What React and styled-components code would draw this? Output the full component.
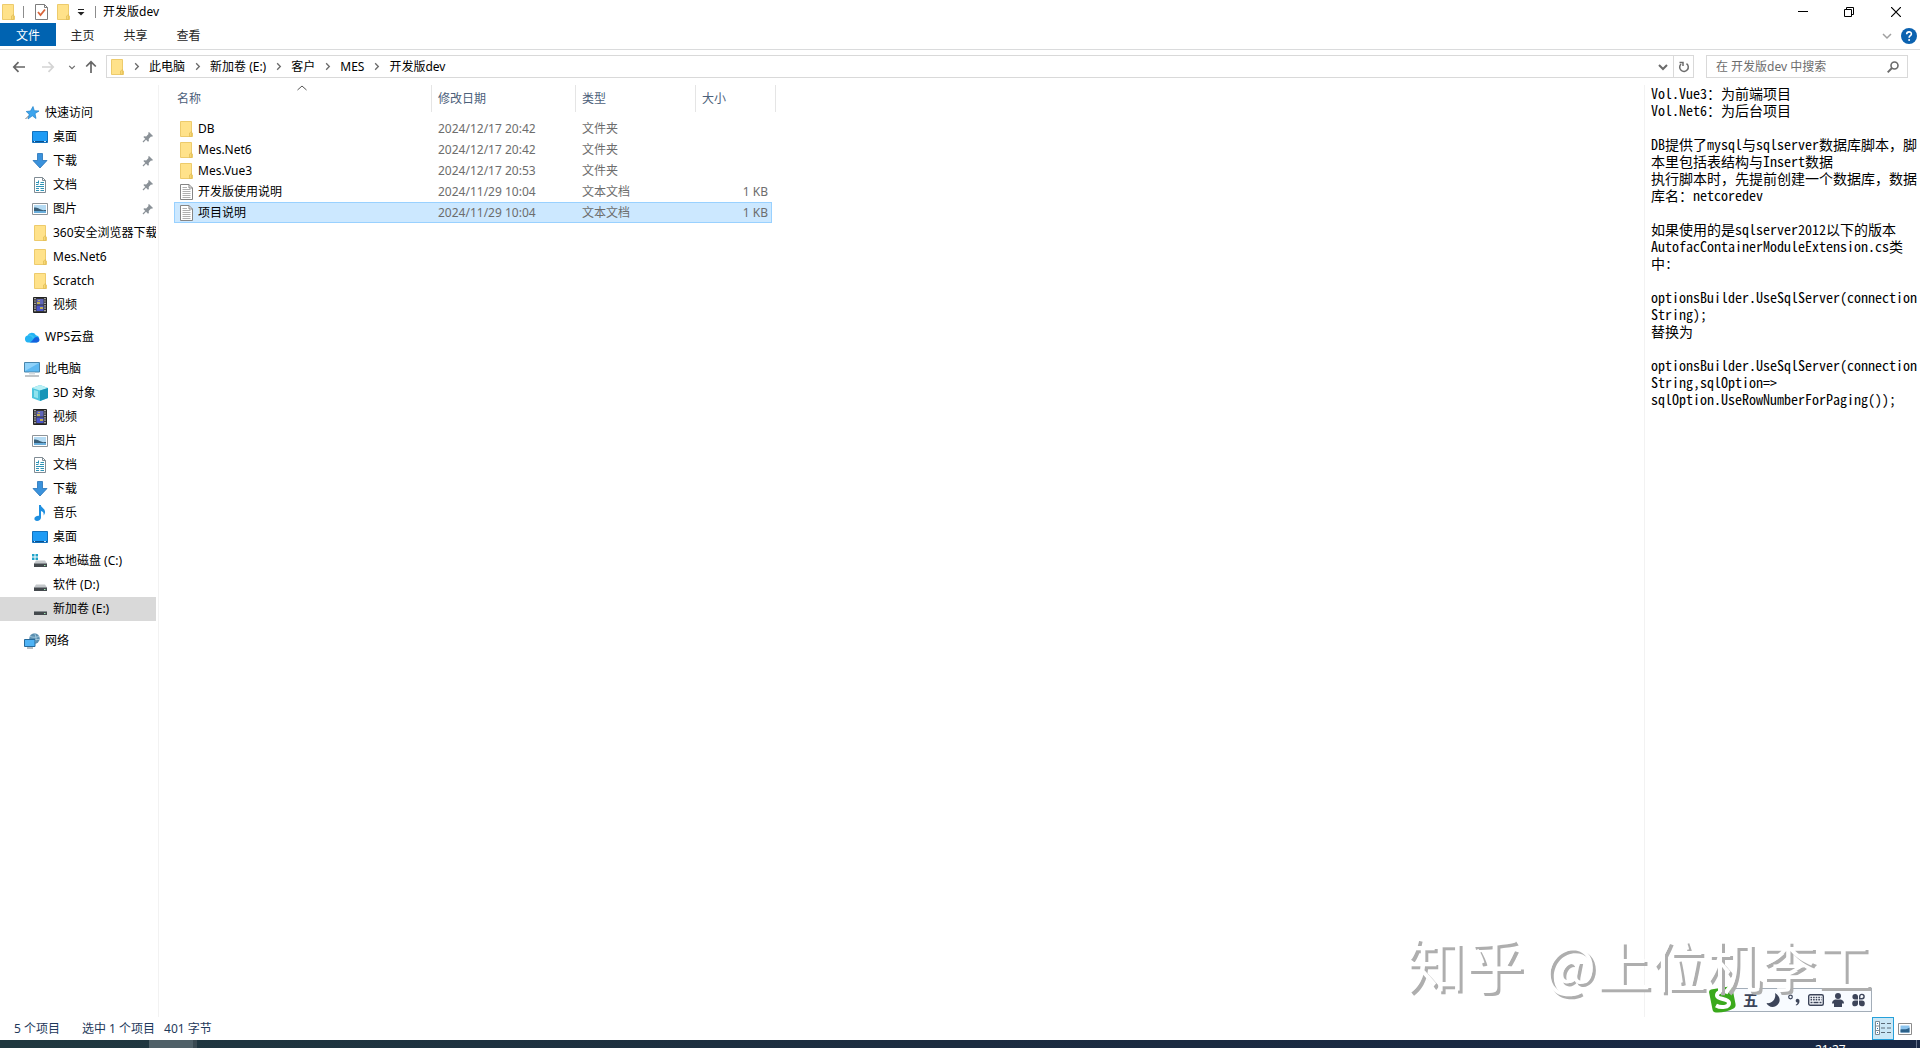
import React, { useState } from 'react';
import styled, { createGlobalStyle } from 'styled-components';

const GlobalStyle = createGlobalStyle`
  * {
    box-sizing: border-box;
  }

  body {
    margin: 0;
    background: #fff;
    color: #000;
    font-family: 'Noto Sans', 'Noto Sans CJK SC', sans-serif;
    font-size: 12px;
    line-height: 16px;
  }

  button,
  input {
    margin: 0;
    padding: 0;
    border: 0;
    background: none;
    color: inherit;
    font: inherit;
  }

  a {
    color: inherit;
    text-decoration: none;
  }

  svg {
    display: block;
    flex: none;
  }
`;

// styled components
const Window = styled.div`
  position: relative;
  display: flex;
  flex-direction: column;
  min-height: 100vh;
  overflow: hidden;
`;

const TitleBar = styled.header`
  display: flex;
  align-items: center;
  height: 23px;
  padding-left: 2px;
`;

const QuickTools = styled.div`
  display: flex;
  align-items: center;
  gap: 8px;
  margin-right: 7px;
`;

const Rule = styled.span`
  width: 1px;
  height: 12px;
  background: #8c8c8c;
`;

const Title = styled.h1`
  flex: 1;
  margin: 0;
  font-size: 12px;
  font-weight: 400;
`;

const IconButton = styled.button`
  display: flex;
  align-items: center;
  justify-content: center;
  width: ${(props) => props.$width}px;
  height: ${(props) => props.$height || 22}px;
`;

const Tabs = styled.nav`
  display: flex;
  align-items: flex-start;
  height: 27px;
  border-bottom: 1px solid #dadbdc;
`;

const Tab = styled.button`
  width: ${(props) => (props.$file ? 56 : 53)}px;
  height: 23px;
  padding-top: 2px;
  background: ${(props) => (props.$file ? '#0063b1' : 'transparent')};
  color: ${(props) => (props.$file ? '#fff' : '#262626')};
`;

const TabTools = styled.div`
  display: flex;
  align-items: center;
  height: 26px;
  margin-left: auto;
  padding-right: 3px;
`;

const AddressRow = styled.div`
  display: flex;
  align-items: center;
  height: 35px;
  padding: 0 12px 2px 8px;
`;

const History = styled.div`
  display: flex;
  align-items: center;
  width: 98px;
`;

const AddressBox = styled.div`
  display: flex;
  flex: 1;
  align-items: center;
  height: 23px;
  padding-left: 4px;
  border: 1px solid #d9d9d9;
`;

const Crumbs = styled.div`
  display: flex;
  flex: 1;
  align-items: center;
`;

const Separator = styled.span`
  display: flex;
  align-items: center;
  justify-content: center;
  width: 25px;
`;

const Refresh = styled(IconButton)`
  border-left: 1px solid #d9d9d9;
`;

const SearchBox = styled.label`
  display: flex;
  align-items: center;
  width: 202px;
  height: 23px;
  margin-left: 12px;
  padding: 0 8px 0 9px;
  border: 1px solid #d9d9d9;

  input {
    flex: 1;
    min-width: 0;
    outline: 0;
  }

  input::placeholder {
    color: #6d6d6d;
    opacity: 1;
  }
`;

const Body = styled.main`
  display: flex;
  flex: 1;
`;

const Sidebar = styled.nav`
  display: flex;
  flex-direction: column;
  gap: 8px;
  width: 159px;
  padding: 16px 2px 0 0;
  border-right: 1px solid #f2f2f2;
`;

const NavLink = styled.a`
  display: flex;
  align-items: center;
  gap: 5px;
  height: 24px;
  padding-left: ${(props) => (props.$root ? 24 : 32)}px;
  background: ${(props) => (props.$active ? '#d9d9d9' : 'transparent')};
  overflow: hidden;
  white-space: nowrap;
`;

const NavIcon = styled.span`
  display: flex;
  flex: none;
  justify-content: center;
  width: 16px;
`;

const NavLabel = styled.span`
  flex: 1;
`;

const Pin = styled.span`
  margin-right: 2px;
`;

const FileArea = styled.section`
  flex: 1;
  padding-left: 15px;
`;

const FileTable = styled.table`
  width: 602px;
  table-layout: fixed;
  border-collapse: separate;
  border-spacing: 0;

  th {
    padding: 0 0 6px;
    font-weight: 400;
    text-align: left;
  }

  td {
    height: 21px;
    padding: 0 4px 0 6px;
    border: solid transparent;
    border-width: 1px 0;
    color: #6d6d6d;
    line-height: 19px;
    white-space: nowrap;
  }

  td:first-child {
    padding-left: 5px;
    border-left-width: 1px;
    color: #000;
  }

  td:nth-child(4) {
    padding-right: 3px;
    border-right-width: 1px;
    text-align: right;
  }
`;

const HeadCell = styled.div`
  position: relative;
  display: flex;
  align-items: center;
  height: 27px;
  padding-left: ${(props) => (props.$first ? 3 : 6)}px;
  border-right: 1px solid #e5e5e5;
  color: #4c607a;
`;

const SortMark = styled.span`
  position: absolute;
  top: 0;
  left: 50%;
  margin-left: -6px;
`;

const FileRow = styled.tr`
  && td {
    background: ${(props) => (props.$selected ? '#cce8ff' : 'transparent')};
    border-color: ${(props) => (props.$selected ? '#99d1ff' : 'transparent')};
  }
`;

const FileName = styled.span`
  display: flex;
  align-items: center;
  gap: 5px;
`;

const Preview = styled.aside`
  width: 276px;
  padding-left: 6px;
  border-left: 1px solid #f2f2f2;
`;

const PreviewText = styled.pre`
  margin: 0;
  font-family: 'Noto Sans Mono CJK SC', 'Noto Sans CJK SC', monospace;
  font-size: 14px;
  line-height: 17px;
`;

const StatusBar = styled.footer`
  display: flex;
  align-items: center;
  height: 23px;
  padding: 0 4px 0 14px;
  color: #1e395b;
`;

const Status = styled.span`
  margin-right: ${(props) => props.$gap}px;
`;

const ViewModes = styled.div`
  display: flex;
  margin-left: auto;
`;

const ViewButton = styled(IconButton)`
  border: 1px solid ${(props) => (props.$active ? '#26a0da' : 'transparent')};
  background: ${(props) => (props.$active ? '#cbe8f6' : 'transparent')};
`;

const Taskbar = styled.div`
  display: flex;
  justify-content: space-between;
  height: 8px;
  padding: 0 3px 0 149px;
  overflow: hidden;
  background: linear-gradient(to right, #20383f, #1c2c40 50%, #182744);
`;

const TaskButton = styled.span`
  width: 48px;
  border-right: 4px solid #3a4a52;
  background: #4f6068;
`;

const Clock = styled.time`
  width: 102px;
  padding-top: 2px;
  border-right: 1px solid #66728a;
  color: #fff;
`;

const Watermark = styled.div`
  position: absolute;
  right: 49px;
  bottom: 57px;
  display: flex;
  gap: 20px;
  color: #fff;
  font-family: 'Noto Sans CJK SC', sans-serif;
  font-size: 55px;
  line-height: 56px;
  text-shadow: 3px 3px 0 #aeaeae;
  white-space: nowrap;
  pointer-events: none;
`;

const Site = styled.span`
  font-size: 59px;
`;

const ImeBar = styled.div`
  position: absolute;
  right: 48px;
  bottom: 36px;
  display: flex;
  align-items: center;
  justify-content: space-between;
  width: 154px;
  height: 24px;
  padding: 0 6px 0 24px;
  border: 1px solid #a3adb8;
  background: #f8fbff;
  color: #3c4459;
  font-size: 15px;
  font-weight: 700;
`;

const ImeLogo = styled.span`
  position: absolute;
  left: -11px;
  bottom: -2px;
`;

// icons
const FolderIcon = () => (
  <svg width="13" height="16" viewBox="0 0 13 16">
    <path d="M.5.5h11v11l1 .5v3.5H.5z" fill="#ffe28a" stroke="#edcb6c" />
    <path d="M9.5 15.5V12l2-1.500v5z" fill="#f7d774" stroke="#e0bb55" strokeWidth=".7" />
  </svg>
);

const TextIcon = () => (
  <svg width="13" height="16" viewBox="0 0 13 16">
    <path d="M.5.5h8.500l3.500 3.500v11.500H.5z" fill="#fff" stroke="#858585" />
    <path d="M9 .5V4h3.500" fill="none" stroke="#858585" />
    <path d="M2.500 3.500H7M2.500 5.500h8M2.500 7.500h8M2.500 9.500h8M2.500 11.500h8M2.500 13.500h8" stroke="#b0b0b0" />
  </svg>
);

const CheckIcon = () => (
  <svg width="13" height="16" viewBox="0 0 13 16">
    <path d="M.5.5h9l3 3v12H.5z" fill="#fff" stroke="#7d7d7d" />
    <path d="M9.500.5v3h3" fill="none" stroke="#7d7d7d" />
    <path d="M3 8l2.500 3L10 5.500" fill="none" stroke="#d8643a" strokeWidth="1.800" />
  </svg>
);

const StarIcon = () => (
  <svg width="16" height="16" viewBox="0 0 16 16">
    <path d="M9 1.500l1.300 4.200 4.700.300-4 2.600 1 4.900-3.700-2.700L4 14l1.200-4.800-3-2.700 4.300-.500z" fill="#3da5ee" stroke="#1d7fc9" strokeWidth=".7" />
    <path d="M4.500 11L1.500 14" stroke="#777" />
  </svg>
);

const DesktopIcon = () => (
  <svg width="16" height="16" viewBox="0 0 16 16">
    <path d="M.5 2.500h15v11H.5z" fill="#1e9bf5" stroke="#1271bd" />
    <path d="M1 12.500h14" stroke="#0b4f8c" />
    <path d="M2 12.500h1M12 12.500h2" stroke="#bfe3ff" />
  </svg>
);

const DownloadIcon = () => (
  <svg width="16" height="16" viewBox="0 0 16 16">
    <path d="M5.500 .5h5v7h4.500l-7 7.500-7-7.500h4.500z" fill="#3a92dc" stroke="#2472b8" strokeWidth=".8" />
  </svg>
);

const DocumentIcon = () => (
  <svg width="16" height="16" viewBox="0 0 16 16">
    <path d="M2.500.5h8l3 3v12h-11z" fill="#fff" stroke="#808c94" />
    <path d="M10.500.5v3h3" fill="none" stroke="#808c94" />
    <path d="M4 5.500h3M8.500 5.500H12M4 7.500h2.500M8 7.500h4M4 9.500h8M4 11.500h3M8.500 11.500H12M4 13.500h3M8.500 13.500H12M6.500 3.500v3" stroke="#2f93b5" />
  </svg>
);

const PictureIcon = () => (
  <svg width="16" height="16" viewBox="0 0 16 16">
    <path d="M.5 2.500h15v11H.5z" fill="#fff" stroke="#8e9499" />
    <path d="M2 4h12v8H2z" fill="#b5dbf3" />
    <path d="M2 6.500c3-.5 5 1 7 2s3 .5 5 .5v2H2z" fill="#3a5f78" />
    <path d="M2 10h12v2H2z" fill="#6aaedb" />
  </svg>
);

const VideoIcon = () => (
  <svg width="16" height="16" viewBox="0 0 16 16">
    <path d="M1.500.5h13v15h-13z" fill="#363636" stroke="#222" />
    <path d="M4.500 2h7v5.500h-7z" fill="#6066b8" />
    <path d="M4.500 8.500h7V14h-7z" fill="#4a55c9" />
    <path d="M5 5h3v2H5zM8 10h3v2H8zM6 3h2v1H6z" fill="#bfae55" />
    <path d="M3 1v14M13 1v14" stroke="#e8e8e8" strokeWidth="1.200" strokeDasharray="1.200 1.200" />
  </svg>
);

const CloudIcon = () => (
  <svg width="16" height="16" viewBox="0 0 16 16">
    <path d="M4 13.500A3.600 3.600 0 0 1 3.500 6.500 4.800 4.800 0 0 1 12 6.300a3.700 3.700 0 0 1 .5 7.200z" fill="#24b3f3" />
    <path d="M5 13.500c4-.500 4-5 7.500-5.500 2 .200 3 1.500 3 3 0 1.600-1.400 2.500-3 2.500z" fill="#1560dd" />
    <path d="M4.500 6.300c3-.6 4.500 1 5 3" fill="none" stroke="#3cc3f2" strokeWidth="1.500" />
  </svg>
);

const ComputerIcon = () => (
  <svg width="16" height="16" viewBox="0 0 16 16">
    <path d="M.5 1.500h15v9.500H.5z" fill="#5eb9f2" stroke="#4886ad" />
    <path d="M1 2h14L1 10z" fill="#8fd2fa" />
    <path d="M5 11.500h6v2H5z" fill="#d4dade" />
    <path d="M1 15h14" stroke="#838b91" />
  </svg>
);

const CubeIcon = () => (
  <svg width="16" height="16" viewBox="0 0 16 16">
    <path d="M0 3l8-3 8 3v10l-8 3-8-3z" fill="#4cc4dd" />
    <path d="M0 3l8-3 8 3-8 2.500z" fill="#b9f0f5" />
    <path d="M8 5.500L16 3v10l-8 3z" fill="#1795b8" />
    <path d="M2 5l4 1.200v7L2 12z" fill="#8fe3ee" />
  </svg>
);

const MusicIcon = () => (
  <svg width="16" height="16" viewBox="0 0 16 16">
    <path d="M7 0h1.800c.3 3 4.700 3.500 4.200 7.500-.2 1.500-.8 2.300-1.500 3 .7-2.500-.5-4-2.500-4.500v6.500C9 14.500 7 16 5 16c-1.600 0-2.600-.9-2.600-2.200C2.400 12 4.500 10.500 7 10.800z" fill="#1e8fe0" />
  </svg>
);

const DriveIcon = ({ system, thin }) => (
  <svg width="16" height="16" viewBox="0 0 16 16">
    {system && <path d="M0 1h2.500v2.500H0zM3.500 1H6v2.500H3.500zM0 4.500h2.500V7H0zM3.500 4.500H6V7H3.500z" fill="#20a3c9" />}
    {!thin && <path d="M4 7.500h9l2 3H2z" fill="#c3c7ca" />}
    <path d="M2 10.500h13V14H2z" fill="#44494d" />
    <path d="M2 10.500h13" stroke="#888d91" />
    <path d="M12 12.500h1.500" stroke="#9fe6b1" />
  </svg>
);

const NetworkIcon = () => (
  <svg width="16" height="16" viewBox="0 0 16 16">
    <circle cx="10.500" cy="5.500" r="5.200" fill="#5b8fb0" />
    <path d="M6 3.500c3 1 6 1 9 0M10.500.5c2 3 2 7 0 10M5.500 6.500h10" fill="none" stroke="#bcdcec" strokeWidth=".7" />
    <path d="M.5 6.500h10.500v7H.5z" fill="#4fb3f5" stroke="#25699a" />
    <path d="M3 15h6" stroke="#6c7a84" />
  </svg>
);

const PinIcon = () => (
  <svg width="12" height="12" viewBox="0 0 12 12">
    <path d="M7 1l4 4-1 .8-1-.2-2.300 2.300.2 2-.9.8L1.400 6.100 2.200 5.200l2 .2L6.500 3l-.3-1.200z" fill="#8a9197" />
    <path d="M3.800 8.200L1 11" stroke="#8a9197" strokeWidth="1.200" />
  </svg>
);

const Chevron = ({ d, size = 10, color = '#6b6b6b', weight = 1.5 }) => (
  <svg width={size} height={size} viewBox="0 0 10 10">
    <path d={d} fill="none" stroke={color} strokeWidth={weight} />
  </svg>
);

const Arrow = ({ turn = 0, color = '#666' }) => (
  <svg width="14" height="14" viewBox="0 0 14 14">
    <path d="M13 7H2M6.500 2.200L1.800 7l4.700 4.800" transform={`rotate(${turn} 7 7)`} fill="none" stroke={color} strokeWidth="1.700" />
  </svg>
);

// data
const groups = [
  [
    { label: '快速访问', icon: <StarIcon />, root: true },
    { label: '桌面', icon: <DesktopIcon />, pin: true },
    { label: '下载', icon: <DownloadIcon />, pin: true },
    { label: '文档', icon: <DocumentIcon />, pin: true },
    { label: '图片', icon: <PictureIcon />, pin: true },
    { label: '360安全浏览器下载', icon: <FolderIcon /> },
    { label: 'Mes.Net6', icon: <FolderIcon /> },
    { label: 'Scratch', icon: <FolderIcon /> },
    { label: '视频', icon: <VideoIcon /> },
  ],
  [{ label: 'WPS云盘', icon: <CloudIcon />, root: true }],
  [
    { label: '此电脑', icon: <ComputerIcon />, root: true },
    { label: '3D 对象', icon: <CubeIcon /> },
    { label: '视频', icon: <VideoIcon /> },
    { label: '图片', icon: <PictureIcon /> },
    { label: '文档', icon: <DocumentIcon /> },
    { label: '下载', icon: <DownloadIcon /> },
    { label: '音乐', icon: <MusicIcon /> },
    { label: '桌面', icon: <DesktopIcon /> },
    { label: '本地磁盘 (C:)', icon: <DriveIcon system /> },
    { label: '软件 (D:)', icon: <DriveIcon /> },
    { label: '新加卷 (E:)', icon: <DriveIcon thin />, active: true },
  ],
  [{ label: '网络', icon: <NetworkIcon />, root: true }],
];

const files = [
  { name: 'DB', date: '2024/12/17 20:42', type: '文件夹' },
  { name: 'Mes.Net6', date: '2024/12/17 20:42', type: '文件夹' },
  { name: 'Mes.Vue3', date: '2024/12/17 20:53', type: '文件夹' },
  { name: '开发版使用说明', date: '2024/11/29 10:04', type: '文本文档', size: '1 KB' },
  { name: '项目说明', date: '2024/11/29 10:04', type: '文本文档', size: '1 KB' },
];

const crumbs = ['此电脑', '新加卷 (E:)', '客户', 'MES', '开发版dev'];

const previewText = `Vol.Vue3：为前端项目
Vol.Net6：为后台项目

DB提供了mysql与sqlserver数据库脚本，脚
本里包括表结构与Insert数据
执行脚本时，先提前创建一个数据库，数据
库名：netcoredev

如果使用的是sqlserver2012以下的版本
AutofacContainerModuleExtension.cs类
中:

optionsBuilder.UseSqlServer(connection
String);
替换为

optionsBuilder.UseSqlServer(connection
String,sqlOption=>
sqlOption.UseRowNumberForPaging());`;

function Header() {
  return (
    <>
      <TitleBar>
        <QuickTools>
          <FolderIcon />
          <Rule />
        </QuickTools>
        <IconButton $width={20} aria-label="属性"><CheckIcon /></IconButton>
        <IconButton $width={24} aria-label="新建文件夹"><FolderIcon /></IconButton>
        <IconButton $width={12} aria-label="自定义快速访问工具栏">
          <svg width="8" height="8" viewBox="0 0 8 8">
            <path d="M1 1.500h6" stroke="#222" />
            <path d="M.5 4h7L4 7.500z" fill="#222" />
          </svg>
        </IconButton>
        <QuickTools>
          <span />
          <Rule />
        </QuickTools>
        <Title>开发版dev</Title>
        <IconButton $width={46} aria-label="最小化">
          <svg width="10" height="10" viewBox="0 0 10 10"><path d="M0 4.500h10" stroke="#000" /></svg>
        </IconButton>
        <IconButton $width={45} aria-label="还原">
          <svg width="10" height="10" viewBox="0 0 10 10">
            <path d="M.5 2.500h7v7h-7zM2.500 2.500v-2h7v7h-2" fill="none" stroke="#000" />
          </svg>
        </IconButton>
        <IconButton $width={49} aria-label="关闭">
          <svg width="10" height="10" viewBox="0 0 10 10"><path d="M0 0l10 10M10 0L0 10" stroke="#000" strokeWidth="1.200" /></svg>
        </IconButton>
      </TitleBar>
      <Tabs>
        <Tab $file>文件</Tab>
        <Tab>主页</Tab>
        <Tab>共享</Tab>
        <Tab>查看</Tab>
        <TabTools>
          <IconButton $width={28} aria-label="展开功能区">
            <Chevron d="M1 3l4 4 4-4" color="#a0a0a0" />
          </IconButton>
          <IconButton $width={16} aria-label="帮助">
            <svg width="16" height="16" viewBox="0 0 16 16">
              <circle cx="8" cy="8" r="8" fill="#0b62b0" />
              <path d="M5.700 6.200c0-3.200 4.800-3 4.700-.2 0 1.700-2.300 1.700-2.300 3.700" fill="none" stroke="#fff" strokeWidth="1.600" />
              <circle cx="8.100" cy="12" r="1" fill="#fff" />
            </svg>
          </IconButton>
        </TabTools>
      </Tabs>
    </>
  );
}

function Address() {
  const [query, setQuery] = useState('');

  return (
    <AddressRow>
      <History>
        <IconButton $width={22} aria-label="后退"><Arrow /></IconButton>
        <IconButton $width={38} aria-label="前进"><Arrow turn={180} color="#d4d4d4" /></IconButton>
        <IconButton $width={10} aria-label="最近浏览的位置"><Chevron d="M1.500 3.500L5 7l3.500-3.500" size={8} /></IconButton>
        <IconButton $width={30} aria-label="上移"><Arrow turn={90} /></IconButton>
      </History>
      <AddressBox>
        <FolderIcon />
        <Crumbs>
          {crumbs.map((crumb) => (
            <React.Fragment key={crumb}>
              <Separator><Chevron d="M3.500 1.500L7 5 3.500 8.500" size={9} /></Separator>
              <a href="#crumb">{crumb}</a>
            </React.Fragment>
          ))}
        </Crumbs>
        <IconButton $width={20} $height={21} aria-label="以前的位置"><Chevron d="M1 3l4 4 4-4" weight={2} /></IconButton>
        <Refresh $width={20} $height={21} aria-label="刷新">
          <svg width="12" height="12" viewBox="0 0 12 12">
            <path d="M8.500 2.600A4.300 4.300 0 1 1 3 3" fill="none" stroke="#6b6b6b" strokeWidth="1.500" />
            <path d="M1.500 1.500H5V5" fill="none" stroke="#6b6b6b" strokeWidth="1.500" />
          </svg>
        </Refresh>
      </AddressBox>
      <SearchBox>
        <input
          type="text"
          aria-label="搜索"
          placeholder="在 开发版dev 中搜索"
          value={query}
          onChange={(e) => setQuery(e.target.value)}
        />
        <svg width="12" height="12" viewBox="0 0 12 12">
          <circle cx="7.500" cy="4.500" r="3.500" fill="none" stroke="#6b6b6b" strokeWidth="1.600" />
          <path d="M5 7L.7 11.300" stroke="#6b6b6b" strokeWidth="1.900" />
        </svg>
      </SearchBox>
    </AddressRow>
  );
}

function Navigation() {
  return (
    <Sidebar>
      {groups.map((group) => (
        <div key={group[0].label}>
          {group.map((item) => (
            <NavLink key={item.label} href="#nav" $root={item.root} $active={item.active}>
              <NavIcon>{item.icon}</NavIcon>
              <NavLabel>{item.label}</NavLabel>
              {item.pin && <Pin><PinIcon /></Pin>}
            </NavLink>
          ))}
        </div>
      ))}
    </Sidebar>
  );
}

function Files() {
  const [selected, setSelected] = useState('项目说明');

  return (
    <FileArea>
      <FileTable>
        <colgroup>
          <col width="258" />
          <col width="144" />
          <col width="120" />
          <col width="76" />
          <col width="4" />
        </colgroup>
        <thead>
          <tr>
            <th>
              <HeadCell $first>
                名称
                <SortMark><Chevron d="M.5 5L5 1l4.500 4" color="#555" weight={1} /></SortMark>
              </HeadCell>
            </th>
            <th><HeadCell>修改日期</HeadCell></th>
            <th><HeadCell>类型</HeadCell></th>
            <th colSpan={2}><HeadCell>大小</HeadCell></th>
          </tr>
        </thead>
        <tbody>
          {files.map((file) => (
            <FileRow key={file.name} $selected={file.name === selected} onClick={() => setSelected(file.name)}>
              <td>
                <FileName>
                  {file.size ? <TextIcon /> : <FolderIcon />}
                  {file.name}
                </FileName>
              </td>
              <td>{file.date}</td>
              <td>{file.type}</td>
              <td>{file.size}</td>
            </FileRow>
          ))}
        </tbody>
      </FileTable>
    </FileArea>
  );
}

function InputMethod() {
  return (
    <ImeBar>
      <ImeLogo>
        <svg width="28" height="27" viewBox="0 0 28 27">
          <path d="M1 6Q1 4 3 3.500L21 .5q3-.5 3.500 2L27.500 18q.5 3-2 4.500Q17 27 8 26.500q-3 0-3.500-3z" fill="#3aa91c" />
          <path d="M20.500 6.500C16 4 8.500 5.500 9 9.800c.5 4 11.500 2.500 12 7 .3 4.500-8 5.500-13 2.700" fill="none" stroke="#fff" strokeWidth="4" />
        </svg>
      </ImeLogo>
      <span>五</span>
      <svg width="14" height="14" viewBox="0 0 14 14">
        <path d="M9 0c6 3.500 6 10 1 13-4 2-8 .5-9.500-3C6 11 10.500 6 9 0z" fill="currentColor" />
      </svg>
      <svg width="12" height="12" viewBox="0 0 12 12">
        <circle cx="2.500" cy="3" r="1.800" fill="none" stroke="currentColor" strokeWidth="1.200" />
        <path d="M8 5.500a2 2 0 0 1 3.500 1.500c0 2.500-1.500 4-3.500 4.500l-.3-.8C9 10.200 9.500 9.500 9.500 8.500 7.800 8.500 7.300 6.800 8 5.500z" fill="currentColor" />
      </svg>
      <svg width="16" height="12" viewBox="0 0 16 12">
        <rect x=".7" y=".7" width="14.600" height="10.600" rx="1.500" fill="none" stroke="currentColor" strokeWidth="1.400" />
        <path d="M2.500 3.500h11M2.500 5.800h11" stroke="currentColor" strokeWidth="1.400" strokeDasharray="1.600 1" />
        <path d="M2.500 8.500h2M5.500 8.500h5M11.500 8.500h2" stroke="currentColor" strokeWidth="1.400" />
      </svg>
      <svg width="12" height="14" viewBox="0 0 12 14">
        <circle cx="6" cy="3" r="3" fill="currentColor" />
        <path d="M3 6.500h6q3 1 3 4h-2V14H2v-3.500H0q0-3 3-4z" fill="currentColor" />
      </svg>
      <svg width="13" height="14" viewBox="0 0 13 14">
        <path d="M6 6.500H3A2.800 2.800 0 1 1 6 3.500zM6 7.500v3A2.900 2.900 0 1 1 3 7.500zM7 7.500h3a2.900 2.900 0 1 1-3 3z" fill="currentColor" />
        <path d="M7.700 5.800V3.500a2.200 2.200 0 1 1 2.300 2.300z" fill="none" stroke="currentColor" strokeWidth="1.400" />
      </svg>
    </ImeBar>
  );
}

function App() {
  return (
    <Window>
      <GlobalStyle />
      <Header />
      <Address />
      <Body>
        <Navigation />
        <Files />
        <Preview>
          <PreviewText>{previewText}</PreviewText>
        </Preview>
      </Body>
      <StatusBar>
        <Status $gap={22}>5 个项目</Status>
        <Status $gap={9}>选中 1 个项目</Status>
        <Status $gap={0}>401 字节</Status>
        <ViewModes>
          <ViewButton $width={22} $height={23} $active aria-label="详细信息">
            <svg width="16" height="15" viewBox="0 0 16 15">
              <path d="M.5.5h4v13h-4zM.5 5h4M.5 9.500h4" fill="#fff" stroke="#7d8a93" />
              <path d="M6 2.500h4M12 2.500h4M6 7h4M12 7h4M6 11.500h4M12 11.500h4" stroke="#5c6c78" />
              <path d="M2 2.500h1M2 7.500h1M2 11.500h1" stroke="#2b6fb0" />
            </svg>
          </ViewButton>
          <ViewButton $width={22} $height={23} aria-label="大图标">
            <svg width="14" height="12" viewBox="0 0 14 12">
              <path d="M.5.5h13v11H.5z" fill="#fff" stroke="#8c8c8c" />
              <path d="M2.500 2.500h9v7h-9z" fill="#8cc4ee" />
              <path d="M2.500 9.500v-3c3-1 5 1 9-2v5z" fill="#2b6089" />
            </svg>
          </ViewButton>
        </ViewModes>
      </StatusBar>
      <Taskbar>
        <TaskButton />
        <Clock>21:27</Clock>
      </Taskbar>
      <InputMethod />
      <Watermark>
        <Site>知乎</Site>
        <span>@上位机李工</span>
      </Watermark>
    </Window>
  );
}

export default App;
